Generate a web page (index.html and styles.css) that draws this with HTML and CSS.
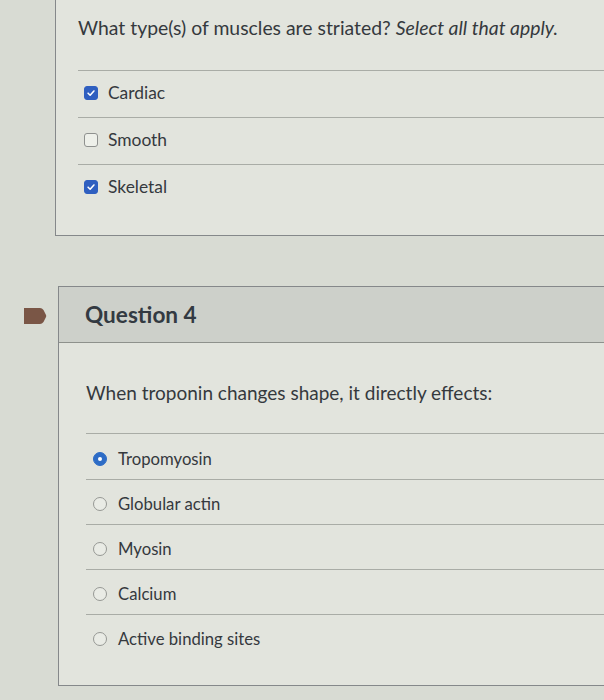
FILE: index.html
```html
<!DOCTYPE html>
<html>
<head>
<meta charset="utf-8">
<link rel="stylesheet" href="styles.css">
</head>
<body>
<div class="page">
  <section class="q1">
    <p class="q-text">What type(s) of muscles are striated? <em>Select all that apply.</em></p>
    <ul class="answers checks">
      <li class="answer"><span class="box checked"><svg viewBox="0 0 14 14" width="14" height="14"><path d="M3.6 7.2 L6 9.6 L10.4 4.6" fill="none" stroke="#fff" stroke-width="1.8" stroke-linecap="round" stroke-linejoin="round"/></svg></span><span class="label">Cardiac</span></li>
      <li class="answer"><span class="box"></span><span class="label">Smooth</span></li>
      <li class="answer"><span class="box checked"><svg viewBox="0 0 14 14" width="14" height="14"><path d="M3.6 7.2 L6 9.6 L10.4 4.6" fill="none" stroke="#fff" stroke-width="1.8" stroke-linecap="round" stroke-linejoin="round"/></svg></span><span class="label">Skeletal</span></li>
    </ul>
  </section>

  <div class="q4-row">
    <div class="gutter">
      <svg class="flag" viewBox="0 0 24 18" width="24" height="18"><path d="M1 1 H17 Q19 1 20.5 3 L23 8 Q23.5 9 23 10 L20.5 15 Q19 17 17 17 H1 Z" fill="#7a5646"/></svg>
    </div>
    <section class="q4">
      <header class="q4-head"><h2>Question 4</h2></header>
      <div class="q4-body">
        <p class="q-text q4-text">When troponin changes shape, it directly effects:</p>
        <ul class="answers radios">
          <li class="answer"><span class="radio selected"></span><span class="label">Tropomyosin</span></li>
          <li class="answer"><span class="radio"></span><span class="label">Globular actin</span></li>
          <li class="answer"><span class="radio"></span><span class="label">Myosin</span></li>
          <li class="answer"><span class="radio"></span><span class="label">Calcium</span></li>
          <li class="answer"><span class="radio"></span><span class="label">Active binding sites</span></li>
        </ul>
      </div>
    </section>
  </div>
</div>
</body>
</html>
```

FILE: styles.css
```css
html, body {
  margin: 0;
  padding: 0;
  background: #d8dbd3;
}
body {
  width: 604px;
  height: 700px;
  overflow: hidden;
  font-family: Lato, "Open Sans", "Liberation Sans", sans-serif;
  color: #35393d;
}
.page {
  display: flex;
  flex-direction: column;
}
.q1 {
  margin-left: 55px;
  background: #e2e4dd;
  border-left: 1px solid #85888a;
  border-bottom: 1px solid #85888a;
  padding: 16px 0 24px 22px;
}
.q-text {
  margin: 0;
  font-size: 19.4px;
  line-height: 24px;
  white-space: nowrap;
}
.q-text em {
  font-style: italic;
}
.answers {
  list-style: none;
  margin: 30px 0 0 0;
  padding: 0;
}
.answer {
  display: flex;
  align-items: center;
  box-sizing: border-box;
  border-top: 1px solid #a9aca6;
  font-size: 17.4px;
}
.checks .answer {
  height: 47px;
  padding: 0 0 3px 6px;
  gap: 10px;
}
.box {
  width: 12px;
  height: 12px;
  border: 1.5px solid #8f918f;
  border-radius: 3px;
  background: #eef0ea;
  display: flex;
  align-items: center;
  justify-content: center;
  flex: none;
}
.box.checked {
  background: #2f5fc0;
  border-color: #2f5fc0;
}
.box svg {
  width: 12px;
  height: 12px;
}
.q4-row {
  display: flex;
  margin-top: 50px;
}
.gutter {
  width: 58px;
  flex: none;
  display: flex;
  align-items: flex-start;
  padding-top: 21px;
  padding-left: 23px;
  box-sizing: border-box;
}
.flag {
  display: block;
}
.q4 {
  flex: 1;
  background: #e2e4dd;
  border-left: 1px solid #85888a;
  border-top: 1px solid #85888a;
  border-bottom: 1px solid #85888a;
}
.q4-head {
  background: #cdd0ca;
  border-bottom: 1px solid #8e918c;
  height: 55px;
  display: flex;
  align-items: center;
  padding-left: 26px;
}
.q4-head h2 {
  margin: 0;
  font-size: 22.6px;
  font-weight: 700;
  color: #333a42;
}
.q4-body {
  padding: 38px 0 26px 27px;
}
.q4-text {
  font-size: 19px;
}
.q4-body .answers {
  margin-top: 28px;
}
.radios .answer {
  height: 45px;
  padding: 3px 0 0 7px;
  gap: 11px;
  font-size: 16.7px;
}
.radios .answer:first-child {
  height: 46px;
  padding-top: 5px;
}
.radio {
  width: 12px;
  height: 12px;
  border: 1.5px solid #969894;
  border-radius: 50%;
  background: #e9ebe5;
  flex: none;
  position: relative;
}
.radio.selected {
  background: #2d6cc6;
  border-color: #2d6cc6;
}
.radio.selected::after {
  content: "";
  position: absolute;
  left: 4px;
  top: 4px;
  width: 4px;
  height: 4px;
  border-radius: 50%;
  background: #fff;
}
```
